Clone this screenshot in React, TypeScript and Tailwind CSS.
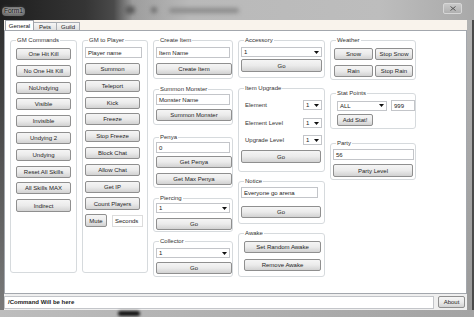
import React from 'react';

const cx = (...c: (string | false | undefined)[]) => c.filter(Boolean).join(' ');

function Btn({ label, className = '' }: { label: string; className?: string }) {
  return (
    <div
      className={cx(
        'flex h-[12px] shrink-0 items-center justify-center rounded-[2px] border border-[#8f8f8f] bg-linear-to-b from-[#f5f5f5] via-[#ebebeb] to-[#d2d2d2] text-[6px] leading-none whitespace-nowrap text-[#1d1d1d]',
        className
      )}
    >
      {label}
    </div>
  );
}

function TextBox({ value, className = '', bold = false }: { value: string; className?: string; bold?: boolean }) {
  return (
    <div
      className={cx(
        'flex h-[11px] shrink-0 items-center border border-[#c3c5c9] bg-white pl-[2px] text-[6px] leading-none whitespace-nowrap text-[#222]',
        bold && 'font-bold',
        className
      )}
    >
      {value}
    </div>
  );
}

function Select({ value, className = '' }: { value: string; className?: string }) {
  return (
    <div
      className={cx(
        'flex h-[10px] shrink-0 items-center justify-between border border-[#c3c5c9] bg-white pr-[2px] pl-[2px] text-[6px] leading-none text-[#222]',
        className
      )}
    >
      <span>{value}</span>
      <svg width="5" height="3" viewBox="0 0 5 3">
        <path d="M0 0h5L2.5 3z" fill="#111" />
      </svg>
    </div>
  );
}

function Group({ title, className = '', children }: { title: string; className?: string; children?: React.ReactNode }) {
  return (
    <fieldset className={cx('min-w-0 rounded-[3px] border border-[#d6dadd] px-[2px]', className)}>
      <legend className="ml-[3px] px-[1px] text-[6px] leading-[8px] whitespace-nowrap text-[#333]">{title}</legend>
      {children}
    </fieldset>
  );
}

function UpgradeRow({ label, className = '' }: { label: string; className?: string }) {
  return (
    <div className={cx('flex items-center justify-between pl-[4px]', className)}>
      <span className="text-[6px] leading-none text-[#333]">{label}</span>
      <Select value="1" className="w-[19px]" />
    </div>
  );
}

export default function App() {
  return (
    <div className="flex h-[317px] w-[474px] flex-col overflow-hidden bg-[#a5a5a5] font-['Liberation_Sans',Arial,sans-serif]">
      {/* title bar */}
      <div className="flex h-[20px] shrink-0 items-center bg-[linear-gradient(90deg,#1e1e1e_0%,#353535_18%,#4a4a4a_24%,#9d9d9d_28%,#b9b9b9_40%,#bdbdbd_80%,#a9a9a9_100%)]">
        <span className="mt-[3px] ml-[2px] rounded-[4px] bg-[#8c8c8c]/70 px-[2px] py-[1px] text-[6.5px] leading-none text-[#111] [text-shadow:0_0_2px_#e6e6e6,0_0_4px_#d0d0d0]">
          Form1
        </span>
        <div className="ml-[100px] h-[8px] w-[10px] rounded-full bg-[#5a5a5a] blur-[2px]" />
        <div className="ml-[16px] h-[6px] w-[6px] rounded-full bg-[#6a6a6a] blur-[2px]" />
        <div className="ml-[12px] h-[5px] w-[70px] rounded-full bg-[#8a8a8a] blur-[2px]" />
        <div className="flex-1" />
        <div className="mr-[12px] mb-[3px] flex h-[11px] w-[19px] items-center justify-center rounded-[2px] border border-[#d7d7d7] bg-linear-to-b from-[#c9c9c9] to-[#b0b0b0]">
          <svg width="6" height="5" viewBox="0 0 6 5">
            <path d="M0.5 0.5L5.5 4.5M5.5 0.5L0.5 4.5" stroke="#555" strokeWidth="1" />
          </svg>
        </div>
      </div>

      <div className="flex flex-1">
        {/* left frame */}
        <div className="w-[4px] bg-linear-to-b from-[#2e2e2e] via-[#555] to-[#7a7a7a]" />

        <div className="flex w-[463px] flex-col bg-[#f9f3ec]">
          {/* tabs */}
          <div className="flex h-[10px] shrink-0 items-end pl-[1px]">
            <div className="flex h-[10px] w-[29px] items-center justify-center border border-b-0 border-[#9ea2a8] bg-white text-[6px] leading-none text-[#111]">
              General
            </div>
            <div className="flex h-[8px] w-[23px] items-center justify-center border border-b-0 border-l-0 border-[#a9adb3] bg-linear-to-b from-[#f6f6f6] to-[#e1e1e1] text-[6px] leading-none text-[#222]">
              Pets
            </div>
            <div className="flex h-[8px] w-[23px] items-center justify-center border border-b-0 border-l-0 border-[#a9adb3] bg-linear-to-b from-[#f6f6f6] to-[#e1e1e1] text-[6px] leading-none text-[#222]">
              Guild
            </div>
          </div>

          {/* tab page */}
          <div className="flex h-[264px] shrink-0 items-start gap-[5px] border border-[#a3a7ad] bg-white pt-[5px] pl-[5px]">
            {/* GM Commands */}
            <Group title="GM Commands" className="h-[237px] w-[67px]">
              <div className="mt-[4px] flex flex-col gap-[4.8px] px-[3px]">
                <Btn label="One Hit Kill" />
                <Btn label="No One Hit Kill" />
                <Btn label="NoUndying" />
                <Btn label="Visible" />
                <Btn label="Invisible" />
                <Btn label="Undying 2" />
                <Btn label="Undying" />
                <Btn label="Reset All Skills" />
                <Btn label="All Skills MAX" />
                <Btn label="Indirect" className="h-[13px]" />
              </div>
            </Group>

            {/* GM to Player */}
            <Group title="GM to Player" className="h-[237px] w-[66px]">
              <div className="flex flex-col">
                <TextBox value="Player name" className="mt-[3px] w-[57px]" />
                <div className="mt-[5px] flex flex-col gap-[4.8px]">
                  <Btn label="Summon" className="w-[55px]" />
                  <Btn label="Teleport" className="w-[55px]" />
                  <Btn label="Kick" className="w-[55px]" />
                  <Btn label="Freeze" className="w-[55px]" />
                  <Btn label="Stop Freeze" className="w-[55px]" />
                  <Btn label="Block Chat" className="w-[55px]" />
                  <Btn label="Allow Chat" className="w-[55px]" />
                  <Btn label="Get IP" className="w-[55px]" />
                  <Btn label="Count Players" className="w-[55px] h-[13px]" />
                </div>
                <div className="mt-[4px] flex items-center">
                  <Btn label="Mute" className="h-[13px] w-[22px] border-[#6f6f6f] from-[#e4e4e4] via-[#d8d8d8] to-[#c8c8c8]" />
                  <TextBox value="Seconds" className="ml-[5px] h-[12px] w-[31px] border-[#dcdcdc]" />
                </div>
              </div>
            </Group>

            {/* column 3 */}
            <div className="flex w-[80px] flex-col">
              <Group title="Create Item" className="px-[1px] pb-[3px]">
                <TextBox value="Item Name" className="mt-[3px] w-full" />
                <Btn label="Create Item" className="mt-[5px] w-[76px]" />
              </Group>
              <Group title="Summon Monster" className="mt-[6px] px-[1px] pb-[3px]">
                <TextBox value="Monster Name" className="mt-[1px] w-full" />
                <Btn label="Summon Monster" className="mt-[4px] h-[11px] w-[76px]" />
              </Group>
              <Group title="Penya" className="mt-[8px] px-[1px] pb-[2px]">
                <TextBox value="0" className="mt-[1px] w-full" />
                <Btn label="Get Penya" className="mt-[3px] w-[76px]" />
                <Btn label="Get Max Penya" className="mt-[5px] w-[76px]" />
              </Group>
              <Group title="Piercing" className="mt-[6px] px-[1px] pb-[1px]">
                <Select value="1" className="mt-[1px] w-full" />
                <Btn label="Go" className="mt-[5px] w-[76px]" />
              </Group>
              <Group title="Collector" className="mt-[5px] px-[1px] pb-[2px]">
                <Select value="1" className="mt-[3px] w-full" />
                <Btn label="Go" className="mt-[4px] w-[76px]" />
              </Group>
            </div>

            {/* column 4 */}
            <div className="flex w-[87px] flex-col">
              <Group title="Accessory" className="pb-[5px]">
                <Select value="1" className="mt-[3px] w-[81px]" />
                <Btn label="Go" className="mt-[2px] h-[13px] w-[81px]" />
              </Group>
              <Group title="Item Upgrade" className="mt-[6px] pb-[8px]">
                <UpgradeRow label="Element" className="mt-[8px]" />
                <UpgradeRow label="Element Level" className="mt-[8px]" />
                <UpgradeRow label="Upgrade Level" className="mt-[7px]" />
                <Btn label="Go" className="mt-[5px] h-[13px] w-[80px]" />
              </Group>
              <Group title="Notice" className="mt-[5px] pb-[5px]">
                <TextBox value="Everyone go arena" className="mt-[2px] w-[77px]" />
                <Btn label="Go" className="mt-[8px] w-[80px]" />
              </Group>
              <Group title="Awake" className="mt-[5px] pb-[5px]">
                <Btn label="Set Random Awake" className="mt-[4px] ml-[3px] h-[10px] w-[77px]" />
                <Btn label="Remove Awake" className="mt-[6px] ml-[3px] h-[10px] w-[77px]" />
              </Group>
            </div>

            {/* column 5 */}
            <div className="flex w-[86px] flex-col">
              <Group title="Weather" className="pb-[2px]">
                <div className="mt-[4px] flex gap-[2px] pl-[1px]">
                  <Btn label="Snow" className="h-[11px] w-[39px]" />
                  <Btn label="Stop Snow" className="h-[11px] w-[38px]" />
                </div>
                <div className="mt-[5px] flex gap-[2px] pl-[1px]">
                  <Btn label="Rain" className="h-[11px] w-[39px]" />
                  <Btn label="Stop Rain" className="h-[11px] w-[38px]" />
                </div>
              </Group>
              <Group title="Stat Points" className="mt-[9px] pb-[2px]">
                <div className="mt-[3px] flex items-center pl-[4px]">
                  <Select value="ALL" className="w-[50px]" />
                  <TextBox value="999" className="ml-[4px] h-[10px] w-[24px]" />
                </div>
                <Btn label="Add Stat!" className="mt-[3px] ml-[4px] h-[11px] w-[36px]" />
              </Group>
              <Group title="Party" className="mt-[10px] pb-[2px]">
                <TextBox value="56" className="mt-[2px] w-[81px] h-[10px]" />
                <Btn label="Party Level" className="mt-[4px] h-[13px] w-[80px]" />
              </Group>
            </div>
          </div>

          {/* bottom bar */}
          <div className="flex h-[16px] shrink-0 items-center bg-[#efefef]">
            <TextBox value="/Command Will be here" bold className="h-[13px] w-[430px] pl-[3px] text-[#111]" />
            <Btn label="About" className="ml-[4px] h-[11px] w-[27px] rounded-[1px]" />
          </div>
        </div>

        {/* right frame */}
        <div className="w-[7px] border-r-[2px] border-[#4a4a4a] bg-linear-to-b from-[#b3b3b3] to-[#9a9a9a]" />
      </div>

      {/* bottom frame */}
      <div className="flex h-[7px] shrink-0 items-center bg-linear-to-r from-[#bdbdbd] to-[#a3a3a3]">
        <div className="ml-[118px] h-[5px] w-[22px] rounded-full bg-[#111] blur-[1.5px]" />
      </div>
    </div>
  );
}
